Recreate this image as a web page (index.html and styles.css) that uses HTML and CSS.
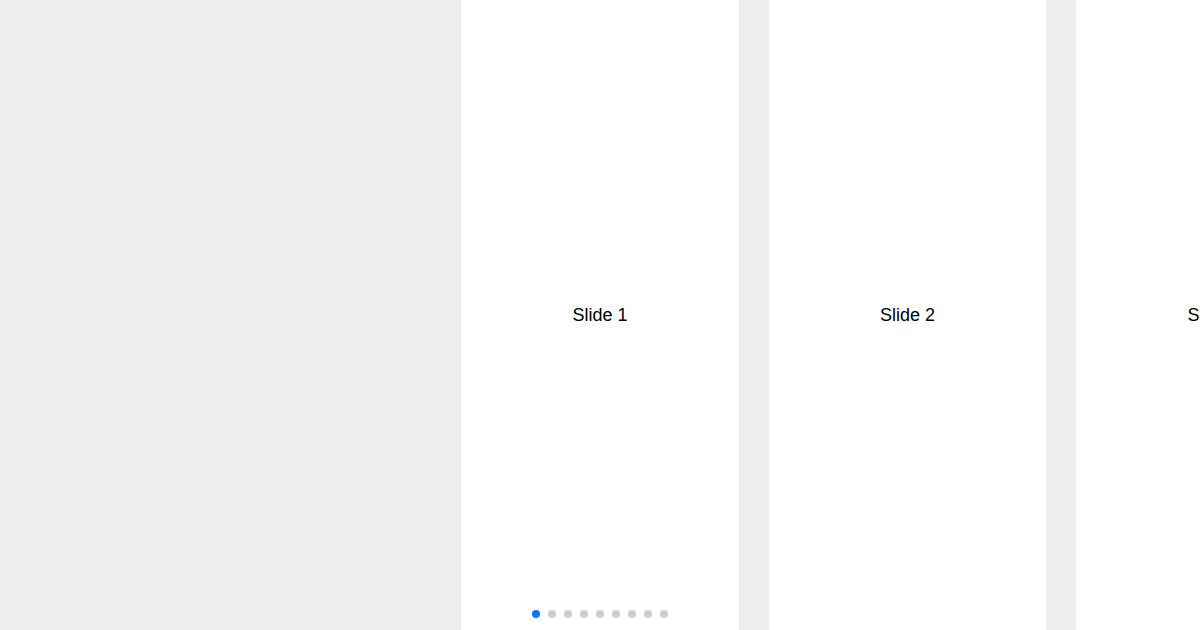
FILE: index.html
```html
<!DOCTYPE html>
<html lang="en">
<head>
    <meta charset="UTF-8">
    <meta name="viewport" content="width=device-width, initial-scale=1.0">
    <title>Swiper demo</title>
    <link rel="stylesheet" href="styles.css">
</head>
<body>
    <div class="swiper">
        <div class="swiper-wrapper">
            <div class="swiper-slide">Slide 1</div>
            <div class="swiper-slide">Slide 2</div>
            <div class="swiper-slide">Slide 3</div>
            <div class="swiper-slide">Slide 4</div>
        </div>

        <!-- Pagination bullets -->
        <div class="swiper-pagination">
            <span class="bullet active"></span>
            <span class="bullet"></span>
            <span class="bullet"></span>
            <span class="bullet"></span>
            <span class="bullet"></span>
            <span class="bullet"></span>
            <span class="bullet"></span>
            <span class="bullet"></span>
            <span class="bullet"></span>
        </div>
    </div>
</body>
</html>
```

FILE: styles.css
```css
html, body {
    height: 100%;
}

body {
    margin: 0;
    padding: 0;
    background: #eee;
    font-family: "Liberation Sans", Helvetica, Arial, sans-serif;
    font-size: 14px;
    color: #000;
}

.swiper {
    position: relative;
    width: 100%;
    height: 100%;
    overflow: hidden;
}

.swiper-wrapper {
    display: flex;
    gap: 30px;
    height: 100%;
    padding-left: 461.25px;
}

.swiper-slide {
    flex-shrink: 0;
    width: 277.5px;
    height: 100%;
    background: #fff;
    font-size: 18px;
    display: flex;
    justify-content: center;
    align-items: center;
    text-align: center;
}

/* Bullets sit over the first slide */
.swiper-pagination {
    position: absolute;
    left: 0;
    right: 0;
    bottom: 12px;
    display: flex;
    justify-content: center;
    gap: 8px;
}

.bullet {
    width: 8px;
    height: 8px;
    border-radius: 50%;
    background: #000;
    opacity: 0.2;
}

.bullet.active {
    background: #007aff;
    opacity: 1;
}
```
